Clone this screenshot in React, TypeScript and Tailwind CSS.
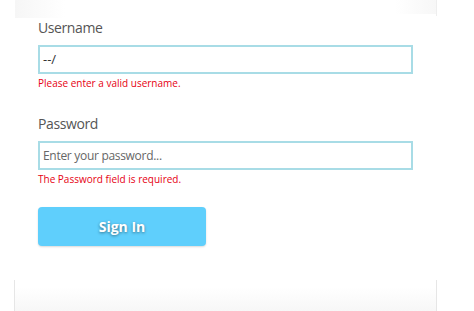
import React from "react";

export default function App() {
  return (
    <div className="relative w-[474px] h-[311px] bg-white overflow-hidden" style={{ fontFamily: '"Open Sans", "Noto Sans", sans-serif' }}>
      {/* faint decorative edges */}
      <div className="absolute left-[14px] top-[280px] w-px h-[31px] bg-[#e6e6e6]" />
      <div className="absolute left-[436px] top-[280px] w-px h-[31px] bg-[#e6e6e6]" />
      <div className="absolute left-[436px] top-0 w-px h-[16px] bg-[#eeeeee]" />
      <div className="absolute left-[395px] top-0 w-[41px] h-[14px] bg-gradient-to-r from-white to-[#f7f7f7]" />
      <div className="absolute left-[15px] top-[287px] w-[421px] h-[24px] bg-gradient-to-b from-white to-[#f7f7f7]" />
      <div className="absolute left-[15px] top-0 w-[50px] h-[18px] bg-gradient-to-r from-[#f6f6f6] to-white" />

      <div className="flex flex-col pl-[38px] pt-[17px] w-[413px]">
        <label className="text-[14px] tracking-[-0.4px] leading-[22px] text-[#555]">Username</label>
        <div className="mt-[6px] h-[29px] border-2 border-[#a8dce6] flex items-center px-[3px] text-[13px] text-[#333]">--/</div>
        <div className="mt-[2px] text-[10px] leading-[15px] text-[#e60012]">Please enter a valid username.</div>

        <label className="mt-[22px] text-[14px] tracking-[-0.4px] leading-[22px] text-[#555]">Password</label>
        <div className="mt-[6px] h-[29px] border-2 border-[#a8dce6] flex items-center px-[3px] text-[12px] tracking-[-0.3px] text-[#666]">Enter your password...</div>
        <div className="mt-[2px] text-[10px] leading-[15px] text-[#e60012]">The Password field is required.</div>

        <button className="mt-[20px] w-[168px] h-[39px] rounded-[4px] bg-[#5fcffc] text-white text-[14px] font-bold shadow-[0_1px_2px_rgba(0,0,0,0.15)] [text-shadow:0_1px_3px_rgba(0,0,0,0.45)]">
          Sign In
        </button>
      </div>
    </div>
  );
}
